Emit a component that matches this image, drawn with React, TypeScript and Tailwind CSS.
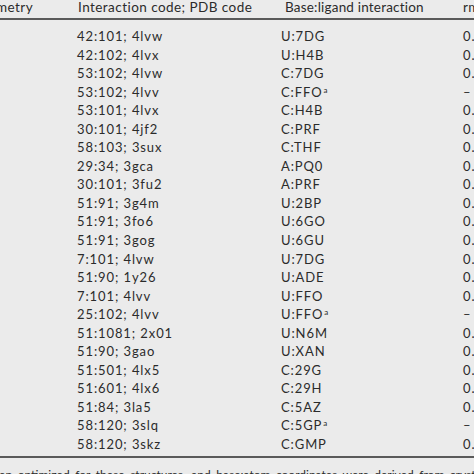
const rows: [string, string, string, string][] = [
  ['42:101; 4lvw', 'U:7DG', '', '0.72'],
  ['42:102; 4lvx', 'U:H4B', '', '0.65'],
  ['53:102; 4lvw', 'C:7DG', '', '0.81'],
  ['53:102; 4lvv', 'C:FFO', 'a', '–'],
  ['53:101; 4lvx', 'C:H4B', '', '0.77'],
  ['30:101; 4jf2', 'C:PRF', '', '0.58'],
  ['58:103; 3sux', 'C:THF', '', '0.69'],
  ['29:34; 3gca', 'A:PQ0', '', '0.61'],
  ['30:101; 3fu2', 'A:PRF', '', '0.55'],
  ['51:91; 3g4m', 'U:2BP', '', '0.74'],
  ['51:91; 3fo6', 'U:6GO', '', '0.70'],
  ['51:91; 3gog', 'U:6GU', '', '0.68'],
  ['7:101; 4lvw', 'U:7DG', '', '0.83'],
  ['51:90; 1y26', 'U:ADE', '', '0.59'],
  ['7:101; 4lvv', 'U:FFO', '', '0.66'],
  ['25:102; 4lvv', 'U:FFO', 'a', '–'],
  ['51:1081; 2x01', 'U:N6M', '', '0.71'],
  ['51:90; 3gao', 'U:XAN', '', '0.63'],
  ['51:501; 4lx5', 'C:29G', '', '0.78'],
  ['51:601; 4lx6', 'C:29H', '', '0.75'],
  ['51:84; 3la5', 'C:5AZ', '', '0.62'],
  ['58:120; 3slq', 'C:5GP', 'a', '–'],
  ['58:120; 3skz', 'C:GMP', '', '0.80'],
];

export default function App() {
  return (
    <div className="w-[474px] h-[474px] overflow-hidden bg-[#ebebeb] text-[#2b2b2b] font-['Lato',sans-serif]">
      {/* Header */}
      <div className="flex h-[20px] border-b-2 border-[#5a5a5a] text-[13.5px] leading-[15px] tracking-[0.45px] whitespace-nowrap">
        <div className="w-[77px] shrink-0">
          <span className="-ml-[30px] inline-block">Geometry</span>
        </div>
        <div className="w-[204px] shrink-0 pl-px">Interaction code; PDB code</div>
        <div className="w-[182px] shrink-0 pl-1 tracking-[0.2px]">Base:ligand interaction</div>
        <div className="shrink-0">rmsd</div>
      </div>

      {/* Body */}
      <div className="pt-[7px] pb-[2px] border-b-2 border-[#5a5a5a] text-[13px] leading-[18.55px] tracking-[0.9px]">
        {rows.map(([code, base, sup, val], i) => (
          <div key={i} className="flex whitespace-nowrap">
            <div className="w-[77px] shrink-0" />
            <div className="w-[204px] shrink-0">{code}</div>
            <div className="w-[182px] shrink-0">
              {base}
              {sup && <sup className="text-[8px] ml-px">{sup}</sup>}
            </div>
            <div className="shrink-0">{val}</div>
          </div>
        ))}
      </div>

      {/* Footnote */}
      <div className="pt-[9px] -ml-[14px] text-[12px] leading-[16px] whitespace-nowrap [word-spacing:2.5px]">
        been optimized for these structures, and base:atom coordinates were derived from crystal structures.
      </div>
    </div>
  );
}
